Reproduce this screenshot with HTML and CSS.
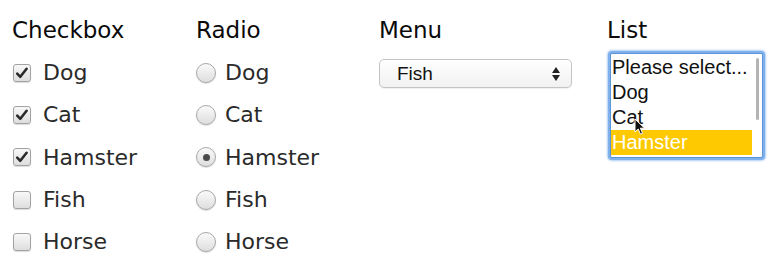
FILE: index.html
```html
<!DOCTYPE html>
<html>
<head>
<meta charset="utf-8">
<link rel="stylesheet" href="styles.css">
</head>
<body>
<div class="page">
  <div class="col col-check">
    <div class="heading">Checkbox</div>
    <div class="item"><span class="cb on"><svg viewBox="0 0 18 18"><path d="M4.2 9.6 L7.3 12.8 L13.6 4.8" /></svg></span><span class="label">Dog</span></div>
    <div class="item"><span class="cb on"><svg viewBox="0 0 18 18"><path d="M4.2 9.6 L7.3 12.8 L13.6 4.8" /></svg></span><span class="label">Cat</span></div>
    <div class="item"><span class="cb on"><svg viewBox="0 0 18 18"><path d="M4.2 9.6 L7.3 12.8 L13.6 4.8" /></svg></span><span class="label">Hamster</span></div>
    <div class="item"><span class="cb"></span><span class="label">Fish</span></div>
    <div class="item"><span class="cb"></span><span class="label">Horse</span></div>
  </div>
  <div class="col col-radio">
    <div class="heading">Radio</div>
    <div class="item"><span class="rd"></span><span class="label">Dog</span></div>
    <div class="item"><span class="rd"></span><span class="label">Cat</span></div>
    <div class="item"><span class="rd on"><span class="dot"></span></span><span class="label">Hamster</span></div>
    <div class="item"><span class="rd"></span><span class="label">Fish</span></div>
    <div class="item"><span class="rd"></span><span class="label">Horse</span></div>
  </div>
  <div class="col col-menu">
    <div class="heading">Menu</div>
    <div class="select">
      <span class="sel-text">Fish</span>
      <span class="arrows"><span class="up"></span><span class="down"></span></span>
    </div>
  </div>
  <div class="col col-list">
    <div class="heading">List</div>
    <div class="listbox">
      <div class="options">
        <div class="opt">Please select...</div>
        <div class="opt">Dog</div>
        <div class="opt">Cat</div>
        <div class="opt selected">Hamster</div>
      </div>
      <div class="scrollbar"><div class="thumb"></div></div>
      <svg class="cursor" viewBox="0 0 12 18" width="12" height="18"><path d="M1 1 L1 14 L4.2 11 L6.5 16.2 L8.6 15.3 L6.4 10.2 L10.6 10.2 Z" fill="#111" stroke="#fff" stroke-width="1"/></svg>
    </div>
  </div>
</div>
</body>
</html>
```

FILE: styles.css
```css
html, body {
  margin: 0;
  padding: 0;
  background: #ffffff;
}
.page {
  display: flex;
  padding-left: 12px;
  padding-top: 17px;
  font-family: "DejaVu Sans", "Open Sans", sans-serif;
}
.col-check { width: 184px; flex: none; }
.col-radio { width: 183px; flex: none; }
.col-menu { width: 228px; flex: none; }
.col-list { width: 170px; flex: none; }

.heading {
  font-size: 23px;
  line-height: 26px;
  color: #0a0a0a;
  margin-bottom: 9px;
}
.item {
  display: flex;
  align-items: center;
  height: 42.3px;
  font-size: 22px;
  line-height: 42.3px;
  color: #2a2a2a;
}
.cb {
  display: inline-block;
  box-sizing: border-box;
  width: 18px;
  height: 18px;
  margin-left: 1px;
  margin-right: 12px;
  margin-top: -1px;
  border: 1px solid #a3a3a3;
  border-radius: 3px;
  background: linear-gradient(#f8f8f8, #dedede);
  box-shadow: 0 1px 1px rgba(0,0,0,0.14);
  position: relative;
}
.cb svg {
  position: absolute;
  left: -1px;
  top: -1px;
  width: 18px;
  height: 18px;
}
.cb svg path {
  fill: none;
  stroke: #2a2a2a;
  stroke-width: 2.6;
  stroke-linecap: round;
  stroke-linejoin: round;
}
.rd {
  display: inline-flex;
  align-items: center;
  justify-content: center;
  box-sizing: border-box;
  width: 20px;
  height: 20px;
  margin-right: 9px;
  margin-top: -1px;
  border: 1px solid #a8a8a8;
  border-radius: 50%;
  background: linear-gradient(#fafafa, #dedede);
  box-shadow: 0 1px 1px rgba(0,0,0,0.14);
}
.rd .dot {
  width: 7px;
  height: 7px;
  border-radius: 50%;
  background: #4a4a4a;
}
.col-menu .heading { margin-bottom: 16px; }
.select {
  box-sizing: border-box;
  width: 193px;
  height: 29px;
  border: 1px solid #c4c4c4;
  border-radius: 5px;
  background: linear-gradient(#ffffff, #f1f1f1);
  box-shadow: 0 1px 1px rgba(0,0,0,0.06);
  display: flex;
  align-items: center;
  justify-content: space-between;
  padding: 0 11px 0 17px;
  font-family: "Liberation Sans", Arial, sans-serif;
  font-size: 19px;
  color: #111;
}
.arrows {
  display: flex;
  flex-direction: column;
  gap: 2px;
}
.up {
  width: 0; height: 0;
  border-left: 4px solid transparent;
  border-right: 4px solid transparent;
  border-bottom: 6px solid #222;
}
.down {
  width: 0; height: 0;
  border-left: 4px solid transparent;
  border-right: 4px solid transparent;
  border-top: 6px solid #222;
}
.col-list .heading { margin-bottom: 10px; }
.listbox {
  position: relative;
  box-sizing: border-box;
  margin-left: 3px;
  width: 153px;
  height: 105px;
  border: 1px solid #5b95d8;
  box-shadow: 0 0 0 2px #7fb0ec, 0 0 2px 3px rgba(110,165,235,0.55);
  border-radius: 2px;
  background: #fff;
  display: flex;
  padding: 1px 0;
}
.options {
  width: 141px;
  flex: none;
  font-family: "Liberation Sans", Arial, sans-serif;
  font-size: 20px;
  color: #111;
}
.opt {
  box-sizing: border-box;
  width: 141px;
  height: 25px;
  line-height: 25px;
  padding-left: 1px;
  white-space: nowrap;
}
.opt.selected {
  background-color: #fec900;
  color: #fff;
}
.scrollbar {
  position: relative;
  width: 10px;
  flex: none;
}
.thumb {
  position: absolute;
  left: 4px;
  top: 3px;
  width: 3px;
  height: 62px;
  border-radius: 2px;
  background: #b4b4b4;
}
.cursor {
  position: absolute;
  left: 23px;
  top: 64px;
}
```
